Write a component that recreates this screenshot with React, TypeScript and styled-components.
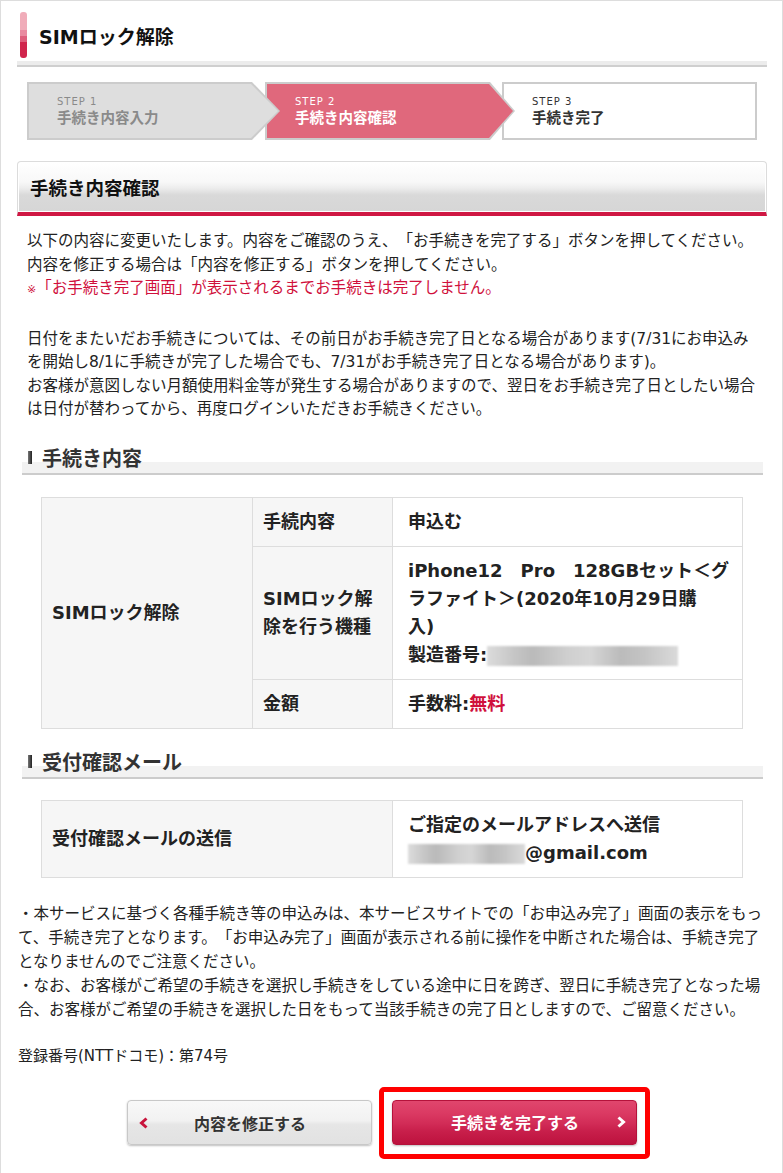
import React from "react";
import styled, { createGlobalStyle } from "styled-components";

type StepKind = "done" | "current" | "todo";

const GlobalStyle = createGlobalStyle`
  html, body {
    margin: 0;
    padding: 0;
    background: #fff;
  }
  body {
    font-family: "DejaVu Sans", "Noto Sans CJK JP", sans-serif;
    color: #222;
    text-spacing-trim: space-all;
  }
  * {
    box-sizing: border-box;
  }
`;

const Frame = styled.div`
  width: 783px;
  min-height: 1173px;
  border: 1px solid #ddd;
  padding: 11px 15px 14px 16px;
`;

const PageTitle = styled.h1`
  display: flex;
  align-items: center;
  gap: 12px;
  height: 46px;
  margin: 0 0 0 3px;
  font-size: 19px;
  font-weight: 700;
  color: #111;
`;

const TitleBar = styled.span`
  width: 7px;
  height: 46px;
  border-radius: 3px;
  background: linear-gradient(
    to bottom,
    #f0acb9 0 40%,
    #e98aa0 40% 53%,
    #de5e7c 53% 65%,
    #d0254c 65% 100%
  );
`;

const TitleRule = styled.div`
  height: 6px;
  margin-top: 3px;
  background: #ececec;
  border-bottom: 2px solid #cfcfcf;
`;

const StepBar = styled.ol`
  display: flex;
  height: 58px;
  margin: 15px 10px 0;
  padding: 0;
  list-style: none;
`;

const stepShape = (tip: number) =>
  `polygon(0 0, calc(100% - ${tip}px) 0, 100% 50%, calc(100% - ${tip}px) 100%, 0 100%)`;

const Step = styled.li<{ $kind: StepKind; $width: number; $overlap: number; $tip: number; $layer: number }>`
  position: relative;
  z-index: ${({ $layer }) => $layer};
  flex: 0 0 ${({ $width }) => $width}px;
  height: 58px;
  margin-left: ${({ $overlap }) => -$overlap}px;
  padding: 2px;
  background: #cccccc;
  clip-path: ${({ $tip }) => ($tip ? stepShape($tip) : "none")};
`;

const stepFace: Record<StepKind, string> = {
  done: "#dedede",
  current: "#e0687c",
  todo: "#ffffff",
};

const stepText: Record<StepKind, string> = {
  done: "#8a8a8a",
  current: "#ffffff",
  todo: "#333333",
};

const StepFace = styled.div<{ $kind: StepKind; $tip: number }>`
  display: flex;
  flex-direction: column;
  justify-content: center;
  height: 100%;
  padding-left: 28px;
  background: ${({ $kind }) => stepFace[$kind]};
  color: ${({ $kind }) => stepText[$kind]};
  clip-path: ${({ $tip }) => ($tip ? stepShape($tip - 1) : "none")};
`;

const StepNo = styled.span`
  font-size: 10px;
  line-height: 14px;
  letter-spacing: 1px;
`;

const StepName = styled.span`
  font-size: 14.5px;
  line-height: 19px;
  font-weight: 700;
`;

const Panel = styled.h2`
  display: flex;
  align-items: center;
  height: 55px;
  margin: 21px 0 0;
  padding: 0 12px;
  border: 1px solid #dcdcdc;
  border-bottom: 4px solid #cf1743;
  border-radius: 4px 4px 0 0;
  box-shadow: inset 0 0 0 1px #fff;
  background: linear-gradient(
    to bottom,
    #ffffff 0%,
    #f8f8f8 40%,
    #ededed 52%,
    #d9d9d9 66%,
    #d6d6d6 100%
  );
  font-size: 18.5px;
  font-weight: 700;
  color: #111;
`;

const Lead = styled.div`
  margin-top: 14px;
  padding: 0 7px 0 10px;
  font-size: 15.5px;
  line-height: 23.5px;
  color: #222;
`;

const LeadBlock = styled.p<{ $gap?: number }>`
  margin: ${({ $gap }) => $gap ?? 0}px 0 0;
`;

const Notice = styled.span`
  color: #d0103c;
`;

const NoticeMark = styled.span`
  font-size: 11px;
`;

const SubHeading = styled.h3<{ $top: number }>`
  display: flex;
  align-items: center;
  gap: 10px;
  height: 29px;
  margin: ${({ $top }) => $top}px 4px 0 5px;
  padding: 0 0 4px 6px;
  border-bottom: 2px solid #cccccc;
  background: linear-gradient(to bottom, transparent 16px, #f2f2f2 16px);
  font-size: 20px;
  font-weight: 700;
  color: #333;
`;

const SubMarker = styled.span`
  width: 4px;
  height: 13px;
  background: linear-gradient(to right, #777, #222);
`;

const InfoTable = styled.table<{ $top: number }>`
  width: 701px;
  margin: ${({ $top }) => $top}px 0 0 24px;
  border-collapse: collapse;
  table-layout: fixed;
`;

const Cell = styled.td<{ $head?: boolean; $pad?: number }>`
  padding: 10px ${({ $pad }) => $pad ?? 10}px 10px ${({ $head }) => ($head ? 10 : 15)}px;
  border: 1px solid #dddddd;
  background: ${({ $head }) => ($head ? "#f6f6f6" : "#ffffff")};
  font-size: 18px;
  line-height: 28px;
  font-weight: 700;
  color: #222;
  vertical-align: middle;
`;

const Free = styled.span`
  color: #d0103c;
`;

const Redacted = styled.span<{ $w: number }>`
  display: inline-block;
  width: ${({ $w }) => $w}px;
  height: 20px;
  vertical-align: middle;
  background: linear-gradient(
    90deg,
    #dcdcdc,
    #c6c6c6 14%,
    #bababa 24%,
    #cfcfcf 42%,
    #d6d6d6 54%,
    #bbbbbb 70%,
    #c4c4c4 82%,
    #dadada
  );
  filter: blur(1.2px);
`;

const Notes = styled.div`
  margin-top: 24px;
  padding-left: 1px;
  font-size: 15.5px;
  line-height: 24px;
  color: #222;
`;

const NoteLine = styled.p`
  margin: 0;
`;

const Registration = styled.p`
  margin: 22px 0 0 1px;
  font-size: 15px;
  line-height: 24px;
  color: #222;
`;

const ButtonRow = styled.div`
  display: flex;
  justify-content: center;
  align-items: center;
  gap: 7px;
  margin-top: 19px;
  padding-right: 7px;
`;

const Highlight = styled.div`
  padding: 8px 8px 9px;
  border: 5px solid #ff0000;
  border-radius: 5px;
`;

const ActionButton = styled.button<{ $primary?: boolean }>`
  display: flex;
  align-items: center;
  width: 245px;
  height: 45px;
  padding: 0 10px 0 11px;
  border: 1px solid ${({ $primary }) => ($primary ? "#b5123b" : "#c8c8c8")};
  border-radius: 4px;
  background: ${({ $primary }) =>
    $primary
      ? "linear-gradient(to bottom, #e0466d 0%, #db3a63 28%, #d22c57 52%, #c81f4b 70%, #bd123e 100%)"
      : "linear-gradient(to bottom, #f8f8f8 0%, #f2f2f2 45%, #e6e6e6 55%, #e2e2e2 100%)"};
  box-shadow: 0 1px 2px rgba(0, 0, 0, 0.25);
  color: ${({ $primary }) => ($primary ? "#fff" : "#333")};
  font-family: inherit;
  font-size: 16px;
  font-weight: 700;
  cursor: pointer;
`;

const ButtonLabel = styled.span`
  flex: 1;
  text-align: center;
`;

const ChevronSlot = styled.span`
  display: flex;
  width: 10px;
  justify-content: center;
`;

const Chevron = ({ dir, color }: { dir: "left" | "right"; color: string }) => (
  <svg width="10" height="12" viewBox="0 0 10 12">
    <polyline
      points={dir === "left" ? "7.5,1.5 2.5,6 7.5,10.5" : "2.5,1.5 7.5,6 2.5,10.5"}
      fill="none"
      stroke={color}
      strokeWidth="3"
    />
  </svg>
);

const steps: { no: string; name: string; kind: StepKind; width: number; overlap: number; tip: number }[] = [
  { no: "STEP 1", name: "手続き内容入力", kind: "done", width: 253, overlap: 0, tip: 28 },
  { no: "STEP 2", name: "手続き内容確認", kind: "current", width: 250, overlap: 15, tip: 25 },
  { no: "STEP 3", name: "手続き完了", kind: "todo", width: 255, overlap: 13, tip: 0 },
];

export default function App() {
  return (
    <>
      <GlobalStyle />
      <Frame>
        <PageTitle>
          <TitleBar />
          SIMロック解除
        </PageTitle>
        <TitleRule />

        <StepBar>
          {steps.map((s, i) => (
            <Step
              key={s.no}
              $kind={s.kind}
              $width={s.width}
              $overlap={s.overlap}
              $tip={s.tip}
              $layer={steps.length - i}
            >
              <StepFace $kind={s.kind} $tip={s.tip}>
                <StepNo>{s.no}</StepNo>
                <StepName>{s.name}</StepName>
              </StepFace>
            </Step>
          ))}
        </StepBar>

        <Panel>手続き内容確認</Panel>

        <Lead>
          <LeadBlock>
            以下の内容に変更いたします。内容をご確認のうえ、「お手続きを完了する」ボタンを押してください。
            <br />
            内容を修正する場合は「内容を修正する」ボタンを押してください。
            <br />
            <Notice>
              <NoticeMark>※</NoticeMark>「お手続き完了画面」が表示されるまでお手続きは完了しません。
            </Notice>
          </LeadBlock>
          <LeadBlock $gap={26}>
            日付をまたいだお手続きについては、その前日がお手続き完了日となる場合があります(7/31にお申込みを開始し8/1に手続きが完了した場合でも、7/31がお手続き完了日となる場合があります)。
            <br />
            お客様が意図しない月額使用料金等が発生する場合がありますので、翌日をお手続き完了日としたい場合は日付が替わってから、再度ログインいただきお手続きください。
          </LeadBlock>
        </Lead>

        <SubHeading $top={24}>
          <SubMarker />
          手続き内容
        </SubHeading>

        <InfoTable $top={22}>
          <colgroup>
            <col style={{ width: 211 }} />
            <col style={{ width: 140 }} />
            <col style={{ width: 350 }} />
          </colgroup>
          <tbody>
            <tr>
              <Cell $head rowSpan={3}>
                SIMロック解除
              </Cell>
              <Cell $head>手続内容</Cell>
              <Cell>申込む</Cell>
            </tr>
            <tr>
              <Cell $head $pad={8}>
                SIMロック解除を行う機種
              </Cell>
              <Cell>
                iPhone12　Pro　128GBセット＜グラファイト＞(2020年10月29日購
                <br />
                入)
                <br />
                製造番号:
                <Redacted $w={191} />
              </Cell>
            </tr>
            <tr>
              <Cell $head>金額</Cell>
              <Cell>
                手数料:<Free>無料</Free>
              </Cell>
            </tr>
          </tbody>
        </InfoTable>

        <SubHeading $top={21}>
          <SubMarker />
          受付確認メール
        </SubHeading>

        <InfoTable $top={21}>
          <colgroup>
            <col style={{ width: 351 }} />
            <col style={{ width: 350 }} />
          </colgroup>
          <tbody>
            <tr>
              <Cell $head>受付確認メールの送信</Cell>
              <Cell>
                ご指定のメールアドレスへ送信
                <br />
                <Redacted $w={117} />
                @gmail.com
              </Cell>
            </tr>
          </tbody>
        </InfoTable>

        <Notes>
          <NoteLine>
            ・本サービスに基づく各種手続き等の申込みは、本サービスサイトでの「お申込み完了」画面の表示をもって、手続き完了となります。「お申込み完了」画面が表示される前に操作を中断された場合は、手続き完了となりませんのでご注意ください。
          </NoteLine>
          <NoteLine>
            ・なお、お客様がご希望の手続きを選択し手続きをしている途中に日を跨ぎ、翌日に手続き完了となった場合、お客様がご希望の手続きを選択した日をもって当該手続きの完了日としますので、ご留意ください。
          </NoteLine>
        </Notes>

        <Registration>登録番号(NTTドコモ)：第74号</Registration>

        <ButtonRow>
          <ActionButton type="button">
            <ChevronSlot>
              <Chevron dir="left" color="#c8143c" />
            </ChevronSlot>
            <ButtonLabel>内容を修正する</ButtonLabel>
            <ChevronSlot />
          </ActionButton>
          <Highlight>
            <ActionButton type="button" $primary>
              <ChevronSlot />
              <ButtonLabel>手続きを完了する</ButtonLabel>
              <ChevronSlot>
                <Chevron dir="right" color="#ffffff" />
              </ChevronSlot>
            </ActionButton>
          </Highlight>
        </ButtonRow>
      </Frame>
    </>
  );
}
